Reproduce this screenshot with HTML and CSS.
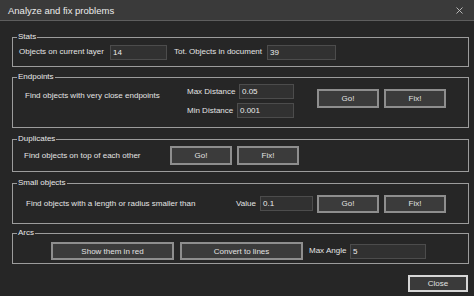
FILE: index.html
```html
<!DOCTYPE html>
<html>
<head>
<meta charset="utf-8">
<link rel="stylesheet" href="styles.css">
</head>
<body>
<div class="window">
  <div class="titlebar">
    <span class="title">Analyze and fix problems</span>
    <svg class="close-x" width="7" height="7" viewBox="0 0 7 7"><path d="M0.5 0.5 L6.5 6.5 M6.5 0.5 L0.5 6.5" stroke="#c4c4c4" stroke-width="0.9" fill="none"/></svg>
  </div>
  <div class="content">
    <div class="group g-stats">
      <span class="legend">Stats</span>
      <span class="lbl w-stats1">Objects on current layer</span>
      <div class="input w57">14</div>
      <span class="lbl w-stats2">Tot. Objects in document</span>
      <div class="input w69">39</div>
    </div>

    <div class="group g-end">
      <span class="legend">Endpoints</span>
      <span class="lbl w-end-text">Find objects with very close endpoints</span>
      <div class="end-col">
        <div class="end-row"><span class="lbl w-maxd">Max Distance</span><div class="input w55">0.05</div></div>
        <div class="end-row"><span class="lbl w-mind">Min Distance</span><div class="input w57">0.001</div></div>
      </div>
      <div class="btns end-btns">
        <div class="btn w62">Go!</div>
        <div class="btn w62">Fix!</div>
      </div>
    </div>

    <div class="group g-dup">
      <span class="legend">Duplicates</span>
      <span class="lbl w-dup-text">Find objects on top of each other</span>
      <div class="btns">
        <div class="btn w62">Go!</div>
        <div class="btn w62">Fix!</div>
      </div>
    </div>

    <div class="group g-small">
      <span class="legend">Small objects</span>
      <span class="lbl w-small-text">Find objects with a length or radius smaller than</span>
      <span class="lbl w-value">Value</span>
      <div class="input w53">0.1</div>
      <div class="btns small-btns">
        <div class="btn w62 h17">Go!</div>
        <div class="btn w62 h17">Fix!</div>
      </div>
    </div>

    <div class="group g-arcs">
      <span class="legend">Arcs</span>
      <div class="btns arcs-btns">
        <div class="btn w123 h17">Show them in red</div>
        <div class="btn w123 h17">Convert to lines</div>
      </div>
      <span class="lbl w-angle">Max Angle</span>
      <div class="input w76">5</div>
    </div>

    <div class="footer">
      <div class="btn close-btn">Close</div>
    </div>
  </div>
</div>
</body>
</html>
```

FILE: styles.css
```css
html, body {
  margin: 0;
  padding: 0;
  background: #262626;
}
body {
  font-family: "Liberation Sans", Arial, sans-serif;
  font-size: 8px;
  color: #e4e4e4;
}
.window {
  width: 474px;
  height: 296px;
  background: #262626;
  overflow: hidden;
}
.titlebar {
  height: 20px;
  background: #3a3a3a;
  border-bottom: 1px solid #5e5e5e;
  display: flex;
  align-items: center;
  justify-content: space-between;
  padding: 0 11px 0 8px;
}
.title {
  font-size: 9.5px;
  color: #ececec;
}
.close-x {
  display: block;
  margin-top: 1px;
}
.content {
  padding: 16px 5px 0 12px;
}
.group {
  position: relative;
  border: 1px solid #9c9c9c;
  display: flex;
  align-items: center;
  box-sizing: border-box;
}
.legend {
  position: absolute;
  top: -6px;
  left: 4px;
  padding: 0 1px 0 1px;
  background: #262626;
  line-height: 10px;
  color: #e8e8e8;
}
.lbl {
  display: block;
  white-space: nowrap;
  line-height: 10px;
}
.input {
  box-sizing: border-box;
  height: 15px;
  line-height: 13px;
  background: #313131;
  border: 1px solid #4c4c4c;
  padding-left: 2px;
  color: #ececec;
}
.btns {
  display: flex;
  gap: 5px;
}
.btn {
  box-sizing: border-box;
  height: 19px;
  background: #3b3b3b;
  border: 2px solid #8e8e8e;
  display: flex;
  align-items: center;
  justify-content: center;
  color: #e2e2e2;
}
.h17 { height: 18px; }
.w53 { width: 53px; }
.w55 { width: 55px; }
.w57 { width: 57px; }
.w62 { width: 62px; }
.w69 { width: 69px; }
.w76 { width: 76px; }
.w123 { width: 123px; }

/* Stats */
.g-stats {
  height: 30px;
  padding-left: 6px;
}
.w-stats1 { width: 91px; }
.w-stats2 { width: 93px; margin-left: 7px; }

/* Endpoints */
.g-end {
  margin-top: 10px;
  height: 51px;
  padding-left: 12px;
  align-items: flex-start;
}
.w-end-text { width: 162px; margin-top: 13px; }
.end-col {
  display: flex;
  flex-direction: column;
  gap: 4px;
  margin-top: 6px;
}
.end-row {
  display: flex;
  align-items: center;
}
.w-maxd { width: 52px; }
.w-mind { width: 50px; }
.end-btns { margin-left: 23px; margin-top: 11px; }

/* Duplicates */
.g-dup {
  margin-top: 11px;
  height: 33px;
  padding-left: 11px;
}
.w-dup-text { width: 146px; }

/* Small objects */
.g-small {
  margin-top: 11px;
  height: 41px;
  padding-left: 13px;
}
.w-small-text { width: 210px; }
.w-value { width: 24px; }
.small-btns { margin-left: 4px; }

/* Arcs */
.g-arcs {
  margin-top: 9px;
  height: 31px;
  padding-left: 38px;
  padding-top: 5px;
}
.arcs-btns { gap: 6px; }
.w-angle { width: 41px; margin-left: 6px; }

/* Footer */
.footer {
  display: flex;
  justify-content: flex-end;
  margin-top: 11px;
  padding-right: 1px;
}
.close-btn {
  width: 60px;
  height: 17px;
  border: 2px solid #d6d6d6;
  background: #3a3a3a;
}
```
